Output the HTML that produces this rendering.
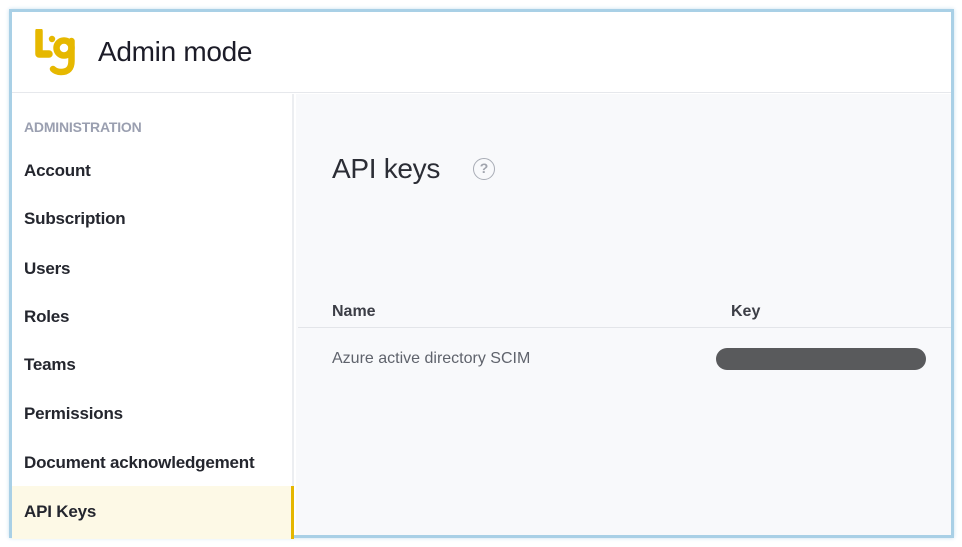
<!DOCTYPE html>
<html><head><meta charset="utf-8"><style>
*{margin:0;padding:0;box-sizing:border-box}
body{width:962px;height:547px;background:#fff;font-family:"Liberation Sans",sans-serif;position:relative;overflow:hidden}
.frame{position:absolute;left:9px;top:9px;width:945px;height:529px;border:3px solid #a9d0e6;box-shadow:0 0 4px #c8dfee}
.hdr{position:absolute;left:0;top:0;right:0;height:81px;background:#fff;border-bottom:1px solid #e6e8ec}
.title{position:absolute;left:86px;top:24px;font-size:28px;color:#1c1c28;letter-spacing:-0.3px}
.side{position:absolute;left:0;top:82px;width:282px;bottom:0;background:#fff;border-right:2px solid #eceef1}
.sec{position:absolute;left:12px;top:25px;font-size:14px;color:#9a9fb0;font-weight:bold;letter-spacing:-0.2px}
.it{position:absolute;left:12px;font-size:17px;color:#24262e;font-weight:bold;letter-spacing:-0.2px}
.sel{position:absolute;left:0;top:392px;width:282px;height:53px;background:#fdf9e6;border-right:3px solid #e5b700}
.main{position:absolute;left:284px;top:82px;right:0;bottom:0;background:#f8f9fb}
.h1{position:absolute;left:36px;top:59px;font-size:28px;color:#2b2d35;letter-spacing:-0.3px}
.q{position:absolute;left:177px;top:64px;width:22px;height:22px;border:1.5px solid #a8acb5;border-radius:50%;color:#a0a4ad;font-size:14px;text-align:center;line-height:19px;font-weight:bold}
.th{position:absolute;top:209px;font-size:16px;font-weight:bold;color:#3c3e46}
.line{position:absolute;left:2px;right:0;top:233px;height:1px;background:#e3e5e9}
.td{position:absolute;left:36px;top:256px;font-size:16px;color:#5f636c}
.pill{position:absolute;left:420px;top:254px;width:210px;height:22px;border-radius:11px;background:#595a5c}
</style></head><body>
<div class="frame">
<div class="hdr">
<svg style="position:absolute;left:22px;top:17px" width="46" height="48" viewBox="0 0 46 48">
<path d="M5 2 V25 H15" stroke="#e6b800" stroke-width="7.5" fill="none" stroke-linecap="round" stroke-linejoin="round"/>
<circle cx="18" cy="10" r="3.2" fill="#e6b800"/>
<circle cx="30" cy="19" r="7.5" stroke="#e6b800" stroke-width="6.5" fill="none"/>
<path d="M37.5 12 V32 Q37.5 43 27 43 Q22 43 19 40" stroke="#e6b800" stroke-width="6.5" fill="none" stroke-linecap="round"/>
</svg>
<div class="title">Admin mode</div>
</div>
<div class="side">
<div class="sec">ADMINISTRATION</div>
<div class="it" style="top:67px">Account</div>
<div class="it" style="top:115px">Subscription</div>
<div class="it" style="top:165px">Users</div>
<div class="it" style="top:213px">Roles</div>
<div class="it" style="top:261px">Teams</div>
<div class="it" style="top:310px">Permissions</div>
<div class="it" style="top:359px">Document acknowledgement</div>
<div class="sel"></div>
<div class="it" style="top:408px">API Keys</div>
</div>
<div class="main">
<div class="h1">API keys</div>
<div class="q">?</div>
<div class="th" style="left:36px">Name</div>
<div class="th" style="left:435px">Key</div>
<div class="line"></div>
<div class="td">Azure active directory SCIM</div>
<div class="pill"></div>
</div>
</div>
</body></html>
